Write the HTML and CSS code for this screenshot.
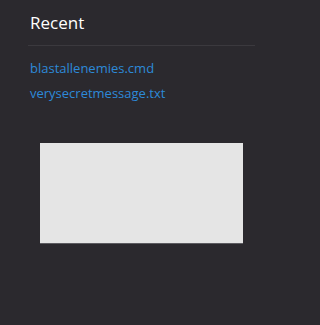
FILE: index.html
```html
<!DOCTYPE html>
<html>
<head>
<meta charset="utf-8">
<link rel="stylesheet" href="styles.css">
</head>
<body>
<div class="panel">
  <h2 class="title">Recent</h2>
  <ul class="recent-list">
    <li><a href="#" class="recent-link">blastallenemies.cmd</a></li>
    <li><a href="#" class="recent-link">verysecretmessage.txt</a></li>
  </ul>
  <div class="preview"></div>
</div>
</body>
</html>
```
FILE: styles.css
```css
html, body {
  margin: 0;
  padding: 0;
  background: #2b292e;
  height: 100%;
}
body {
  font-family: "Open Sans", "Noto Sans", sans-serif;
}
.panel {
  width: 279px;
  box-sizing: border-box;
  padding: 10px 24px 0 28px;
  display: flex;
  flex-direction: column;
}
.title {
  margin: 0;
  padding: 0 0 9px 2px;
  font-size: 17px;
  font-weight: 400;
  line-height: 26px;
  color: #ffffff;
  border-bottom: 1px solid #3b393e;
}
.recent-list {
  list-style: none;
  margin: 0;
  padding: 9px 0 0 2px;
  display: flex;
  flex-direction: column;
}
.recent-list li {
  height: 25px;
  line-height: 25px;
}
.recent-link {
  font-size: 13px;
  color: #2d8ad9;
  text-decoration: none;
}
.preview {
  margin: 38px 0 0 12px;
  width: 203px;
  height: 100px;
  background: #e5e5e5;
  border-bottom: 1px solid #5c5b60;
}
```
